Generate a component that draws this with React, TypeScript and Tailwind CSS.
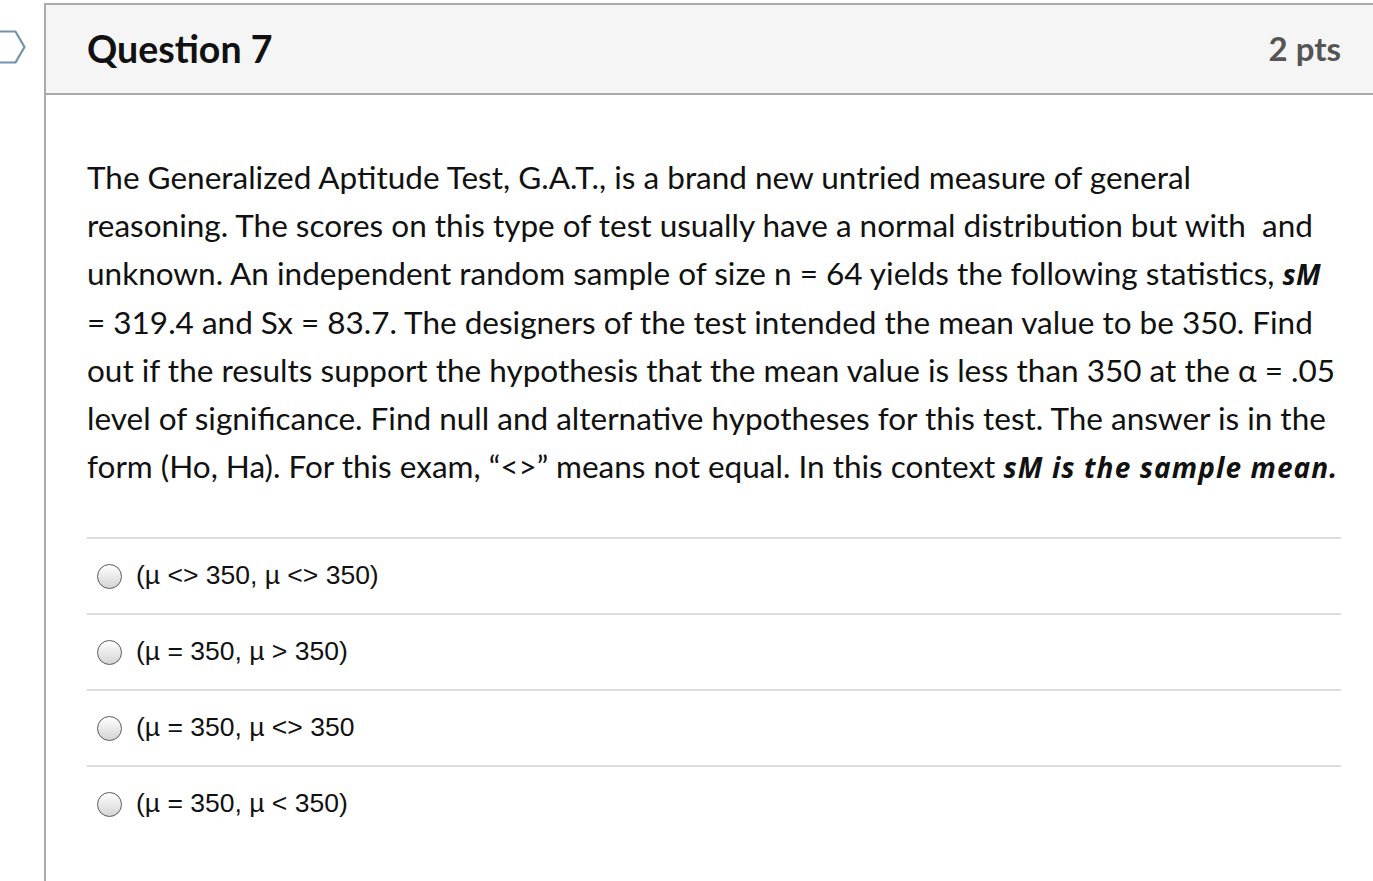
import React from "react";

const bi = "italic font-bold text-[28px] tracking-[1.1px]";
const biStyle = { fontFamily: "'Open Sans', Lato, sans-serif" };

const lines: React.ReactNode[] = [
  "The Generalized Aptitude Test, G.A.T., is a brand new untried measure of general",
  "reasoning. The scores on this type of test usually have a normal distribution but with  and",
  <>
    unknown. An independent random sample of size n = 64 yields the following statistics, <b className="italic font-bold text-[28px] tracking-[0.2px]" style={biStyle}>sM</b>
  </>,
  "= 319.4 and Sx = 83.7. The designers of the test intended the mean value to be 350. Find",
  "out if the results support the hypothesis that the mean value is less than 350 at the α = .05",
  "level of significance. Find null and alternative hypotheses for this test. The answer is in the",
  <>
    form (Ho, Ha). For this exam, “&lt;&gt;” means not equal. In this context <b className={bi} style={biStyle}>sM is the sample mean.</b>
  </>,
];

const answers = [
  "(µ <> 350, µ <> 350)",
  "(µ = 350, µ > 350)",
  "(µ = 350, µ <> 350",
  "(µ = 350, µ < 350)",
];

function Radio() {
  return (
    <span className="inline-block w-[25px] h-[25px] rounded-full border-[1.5px] border-[#5a5a5a] bg-gradient-to-b from-[#ffffff] to-[#d4d4d4] shrink-0" />
  );
}

export default function App() {
  return (
    <div className="relative w-[1373px] h-[881px] overflow-hidden bg-white" style={{ fontFamily: "Lato, 'Liberation Sans', sans-serif" }}>
      {/* left marker */}
      <svg className="absolute left-0 top-[30px]" width="28" height="34" viewBox="0 0 28 34">
        <path d="M-4 1.5 H15.5 L24.5 17 L15.5 32.5 H-4" fill="#fff" stroke="#6f93ab" strokeWidth="2.2" strokeLinejoin="round" />
      </svg>
      <div className="absolute left-[44px] top-[3px] w-[1340px] h-[900px] border-l-2 border-t-2 border-[#aaaaaa]">
        <div className="h-[90px] bg-[#f5f5f5] border-b-2 border-[#aaaaaa] flex items-center justify-between pl-[41px] pr-[43px]">
          <div className="text-[37.5px] font-bold text-[#111]">Question 7</div>
          <div className="text-[33px] font-bold text-[#555]">2 pts</div>
        </div>
        <div className="pl-[41px] pr-[43px]">
          <div className="pt-[58px] pb-[46px] text-[31.5px] leading-[48px] text-[#111]">
            {lines.map((l, i) => (
              <div key={i} className="whitespace-pre">{l}</div>
            ))}
          </div>
          <div style={{ fontFamily: "'Liberation Sans', Arial, sans-serif" }}>
            {answers.map((a, i) => (
              <div key={i} className="h-[76px] border-t-2 border-[#dddddd] flex items-center gap-[14px] pl-[10px] text-[26.5px] text-[#111]">
                <Radio />
                <span>{a}</span>
              </div>
            ))}
          </div>
        </div>
      </div>
    </div>
  );
}
